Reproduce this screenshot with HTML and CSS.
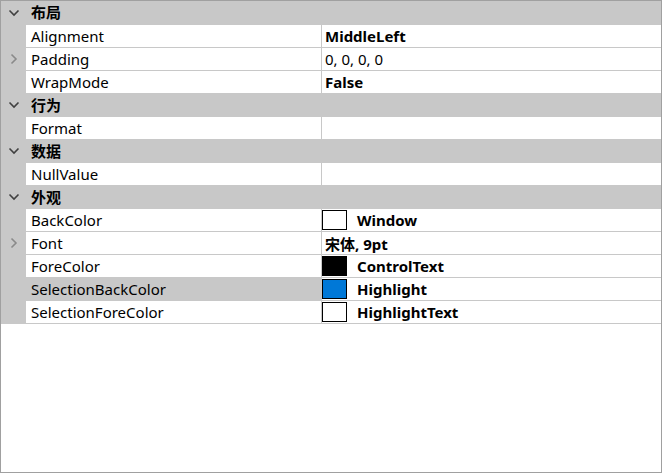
FILE: index.html
```html
<!DOCTYPE html>
<html lang="zh">
<head>
    <meta charset="UTF-8">
    <title>PropertyGrid</title>
    <link rel="stylesheet" href="styles.css">
</head>
<body>
    <div class="grid">
        <div class="cat first">
            <span class="gutter"><svg class="chev" width="12" height="8" viewBox="0 0 12 8"><path d="M1.5 1.5 L6 6 L10.5 1.5" /></svg></span>
            <span class="cat-name">布局</span>
        </div>
        <div class="row">
            <span class="gutter"></span>
            <span class="name">Alignment</span>
            <span class="value bold">MiddleLeft</span>
        </div>
        <div class="row">
            <span class="gutter"><svg class="chev light" width="8" height="12" viewBox="0 0 8 12"><path d="M1.5 1.5 L6 6 L1.5 10.5" /></svg></span>
            <span class="name">Padding</span>
            <span class="value">0, 0, 0, 0</span>
        </div>
        <div class="row">
            <span class="gutter"></span>
            <span class="name">WrapMode</span>
            <span class="value bold">False</span>
        </div>

        <div class="cat">
            <span class="gutter"><svg class="chev" width="12" height="8" viewBox="0 0 12 8"><path d="M1.5 1.5 L6 6 L10.5 1.5" /></svg></span>
            <span class="cat-name">行为</span>
        </div>
        <div class="row">
            <span class="gutter"></span>
            <span class="name">Format</span>
            <span class="value"></span>
        </div>

        <div class="cat">
            <span class="gutter"><svg class="chev" width="12" height="8" viewBox="0 0 12 8"><path d="M1.5 1.5 L6 6 L10.5 1.5" /></svg></span>
            <span class="cat-name">数据</span>
        </div>
        <div class="row">
            <span class="gutter"></span>
            <span class="name">NullValue</span>
            <span class="value"></span>
        </div>

        <div class="cat">
            <span class="gutter"><svg class="chev" width="12" height="8" viewBox="0 0 12 8"><path d="M1.5 1.5 L6 6 L10.5 1.5" /></svg></span>
            <span class="cat-name">外观</span>
        </div>
        <div class="row">
            <span class="gutter"></span>
            <span class="name">BackColor</span>
            <span class="value bold"><span class="swatch white"></span>Window</span>
        </div>
        <div class="row">
            <span class="gutter"><svg class="chev light" width="8" height="12" viewBox="0 0 8 12"><path d="M1.5 1.5 L6 6 L1.5 10.5" /></svg></span>
            <span class="name">Font</span>
            <span class="value bold">宋体, 9pt</span>
        </div>
        <div class="row">
            <span class="gutter"></span>
            <span class="name">ForeColor</span>
            <span class="value bold"><span class="swatch black"></span>ControlText</span>
        </div>
        <div class="row selected">
            <span class="gutter"></span>
            <span class="name">SelectionBackColor</span>
            <span class="value bold"><span class="swatch blue"></span>Highlight</span>
        </div>
        <div class="row">
            <span class="gutter"></span>
            <span class="name">SelectionForeColor</span>
            <span class="value bold"><span class="swatch white"></span>HighlightText</span>
        </div>
    </div>
</body>
</html>
```

FILE: styles.css
```css
body {
    margin: 0;
    font-family: "Noto Sans", "Noto Sans CJK SC", sans-serif;
    font-size: 15px;
    color: #000;
    background: #fff;
}
.grid {
    box-sizing: border-box;
    width: 662px;
    height: 473px;
    border: 1px solid #a0a0a0;
    background: #fff;
}
.cat,
.row {
    display: flex;
    height: 22px;
    border-bottom: 1px solid #c8c8c8;
}
.cat {
    background: #c8c8c8;
}
.cat.first {
    height: 23px;
}
.gutter {
    flex: 0 0 25px;
    background: #c8c8c8;
    display: flex;
    align-items: center;
    justify-content: center;
}
.chev {
    fill: none;
    stroke: #404040;
    stroke-width: 1.6;
}
.chev.light {
    stroke: #8a8a8a;
}
.cat-name {
    padding-left: 5px;
    font-weight: bold;
    line-height: 22px;
}
.name {
    flex: 0 0 290px;
    padding-left: 5px;
    border-right: 1px solid #c8c8c8;
    line-height: 22px;
    white-space: nowrap;
}
.row.selected .name {
    background: #c8c8c8;
}
.value {
    flex: 1;
    display: flex;
    align-items: center;
    padding-left: 3px;
    white-space: nowrap;
}
.bold {
    font-weight: bold;
}
.swatch {
    box-sizing: border-box;
    width: 25px;
    height: 20px;
    margin-left: -3px;
    margin-right: 10px;
    border: 1px solid #000;
}
.swatch.white {
    background: #fff;
}
.swatch.black {
    background: #000;
}
.swatch.blue {
    background: #0078d7;
}
```
